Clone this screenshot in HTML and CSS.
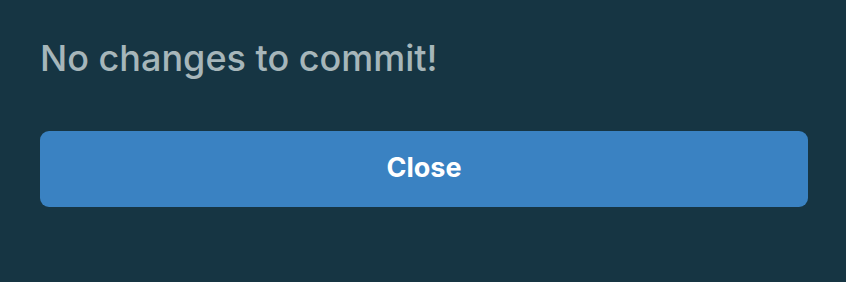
FILE: index.html
```html
<!DOCTYPE html>
<html>
<head>
<meta charset="utf-8">
<link rel="stylesheet" href="styles.css">
</head>
<body>
<div class="dialog">
  <p class="message">No changes to commit!</p>
  <button class="close-btn">Close</button>
</div>
</body>
</html>
```
FILE: styles.css
```css
html, body {
  margin: 0;
  padding: 0;
  background: #163543;
  width: 846px;
  height: 282px;
  overflow: hidden;
}
.dialog {
  padding: 36px 38px 0 40px;
  display: flex;
  flex-direction: column;
  font-family: Inter, "Noto Sans", sans-serif;
}
.message {
  margin: 0;
  font-size: 36px;
  line-height: 44px;
  font-weight: 500;
  color: #a6b6ba;
}
.close-btn {
  margin-top: 51px;
  height: 76px;
  border: none;
  border-radius: 9px;
  background: #3a82c2;
  color: #ffffff;
  font-family: Inter, "Noto Sans", sans-serif;
  font-size: 27px;
  font-weight: 700;
  padding: 0 0 4px 0;
}
```
